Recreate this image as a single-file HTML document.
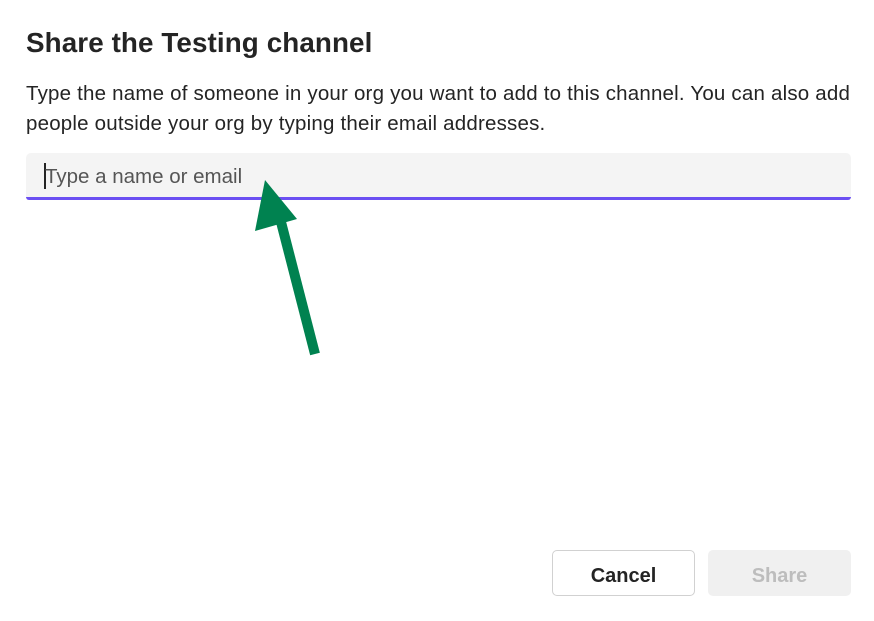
<!DOCTYPE html>
<html><head><style>
body{margin:0;width:874px;height:621px;background:#fff;font-family:"Liberation Sans",sans-serif;position:relative;overflow:hidden}
h1{position:absolute;left:26px;top:27px;margin:0;font-size:27.8px;font-weight:bold;color:#242424;letter-spacing:0.1px}
p{position:absolute;left:26px;top:79px;margin:0;font-size:20.5px;line-height:30px;color:#242424;width:860px;letter-spacing:0.2px;white-space:nowrap}
.inp{position:absolute;left:26px;top:153px;width:825px;height:44px;background:#f4f4f4;border-radius:5px 5px 3px 3px;border-bottom:3px solid #6b4ff2}
.inp span{position:absolute;left:19px;top:12px;font-size:20.5px;color:#555}
.caret{position:absolute;left:18px;top:10px;width:2px;height:26px;background:#242424}
.btn{position:absolute;top:550px;width:143px;height:46px;border-radius:5px;box-sizing:border-box;font-size:20px;font-weight:bold;text-align:center;line-height:52px}
</style></head><body>
<h1>Share the Testing channel</h1>
<p>Type the name of someone in your org you want to add to this channel. You can also add<br>people outside your org by typing their email addresses.</p>
<div class="inp"><div class="caret"></div><span>Type a name or email</span></div>
<div class="btn" style="left:552px;border:1px solid #d1d1d1;color:#242424;line-height:50px">Cancel</div>
<div class="btn" style="left:708px;background:#f0f0f0;color:#bdbdbd">Share</div>
<svg width="874" height="621" style="position:absolute;left:0;top:0">
<line x1="315" y1="354" x2="281" y2="222" stroke="#008250" stroke-width="10"/>
<polygon points="265,180 255,231 297,219" fill="#008250"/>
</svg>
</body></html>
